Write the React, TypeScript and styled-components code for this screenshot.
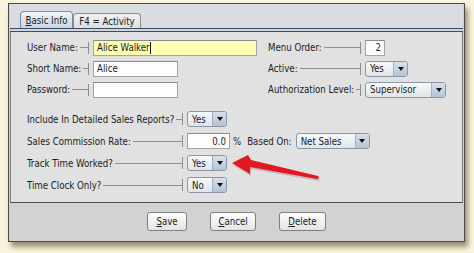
import React from "react";
import styled, { createGlobalStyle } from "styled-components";

const GlobalStyle = createGlobalStyle`
  html, body {
    margin: 0;
    padding: 0;
    background: #fbf4dc;
  }
  body {
    font-family: "DejaVu Sans Condensed", "Liberation Sans", sans-serif;
    font-size: 9.6px;
    color: #1b1b1b;
  }
`;

const Page = styled.div`
  position: relative;
  width: 474px;
  height: 253px;
  padding: 3px 0 0 8px;
  box-sizing: border-box;
`;

const Window = styled.div`
  width: 457px;
  height: 239px;
  box-sizing: border-box;
  border: 1px solid #4b4b4b;
  background: #d2d2d2;
  box-shadow: 3px 5px 5px rgba(75, 65, 40, 0.55);
  display: flex;
  flex-direction: column;
`;

const TabStrip = styled.div`
  height: 24px;
  margin: 0 1px;
  padding-left: 10px;
  display: flex;
  align-items: flex-end;
  background: #d9dce1;
`;

const Tab = styled.div<{ $active?: boolean; $width: number }>`
  width: ${(p) => p.$width}px;
  height: ${(p) => (p.$active ? 17 : 15)}px;
  box-sizing: border-box;
  display: flex;
  align-items: center;
  justify-content: center;
  border: 1px solid ${(p) => (p.$active ? "#7a8aa0" : "#8d8d8d")};
  border-bottom: none;
  border-radius: 4px 4px 0 0;
  background: ${(p) =>
    p.$active
      ? "linear-gradient(#f1f4f8, #c9d4e1)"
      : "linear-gradient(#f2f2f2, #dedfe1)"};
  white-space: nowrap;
`;

const TabRule = styled.div`
  height: 2px;
  margin: 0 1px;
  background: #cdd5e0;
  border-top: 1px solid #3e4c60;
  border-bottom: 1px solid #3e4c60;
`;

const Panel = styled.div`
  margin: 0 1px;
  height: 171px;
  box-sizing: border-box;
  background: #e1e1e1;
  border: 1px solid #7b7b7b;
  border-top: none;
  border-bottom-color: #4d4d4d;
  padding: 5px 0 0 16px;
`;

const TopGrid = styled.div`
  display: grid;
  grid-template-columns: 241px 1fr;
  grid-auto-rows: 21px;
`;

const BottomGrid = styled.div`
  margin-top: 8px;
  display: grid;
  grid-auto-rows: 22px;
`;

const Row = styled.div<{ $labelWidth: number }>`
  display: grid;
  grid-template-columns: ${(p) => p.$labelWidth}px auto;
  column-gap: 4px;
  align-items: center;
  justify-content: start;
`;

const LabelCell = styled.div`
  display: flex;
  align-items: center;
`;

const Label = styled.span`
  white-space: nowrap;
`;

const Leader = styled.span`
  flex: 1;
  height: 1px;
  margin-left: 2px;
  background: #8e8e8e;
`;

const Tick = styled.span`
  width: 1px;
  height: 12px;
  background: #8e8e8e;
`;

const TextBox = styled.div<{ $width: number; $yellow?: boolean; $right?: boolean }>`
  width: ${(p) => p.$width}px;
  height: 16px;
  box-sizing: border-box;
  border: 1px solid #a3a3a3;
  border-top-color: #8a8a8a;
  background: ${(p) => (p.$yellow ? "#ffffb3" : "#fdfdfd")};
  padding: 0 3px;
  display: flex;
  align-items: center;
  justify-content: ${(p) => (p.$right ? "flex-end" : "flex-start")};
  white-space: nowrap;
`;

const Caret = styled.span`
  width: 1px;
  height: 12px;
  background: #111;
`;

const SelectBox = styled.div<{ $width: number }>`
  width: ${(p) => p.$width}px;
  height: 16px;
  box-sizing: border-box;
  border: 1px solid #8b96a6;
  border-radius: 3px;
  background: linear-gradient(#f7f9fb, #dfe5ec);
  display: flex;
  align-items: stretch;
  overflow: hidden;
`;

const SelectValue = styled.span`
  flex: 1;
  padding-left: 4px;
  display: flex;
  align-items: center;
  white-space: nowrap;
`;

const SelectArrow = styled.span`
  width: 13px;
  border-left: 1px solid #a2afc0;
  background: linear-gradient(#d8e1eb, #b4c3d4);
  display: flex;
  align-items: center;
  justify-content: center;

  &::after {
    content: "";
    border-left: 3px solid transparent;
    border-right: 3px solid transparent;
    border-top: 4px solid #111;
  }
`;

const Inline = styled.div`
  display: flex;
  align-items: center;
`;

const Unit = styled.span<{ $gap: number }>`
  margin-left: ${(p) => p.$gap}px;
  white-space: nowrap;
`;

const ButtonBar = styled.div`
  flex: 1;
  display: flex;
  align-items: center;
  justify-content: center;
  gap: 23px;
  padding-bottom: 1px;
`;

const Button = styled.div<{ $width: number }>`
  width: ${(p) => p.$width}px;
  height: 19px;
  box-sizing: border-box;
  border: 1px solid #7f7f7f;
  border-radius: 3px;
  background: linear-gradient(#fdfdfd, #e4e4e4);
  display: flex;
  align-items: center;
  justify-content: center;
`;

const Key = styled.span`
  text-decoration: underline;
`;

const ArrowMark = styled.svg`
  position: absolute;
  left: 228px;
  top: 150px;
`;

function Select({ value, width }: { value: string; width: number }) {
  return (
    <SelectBox $width={width}>
      <SelectValue>{value}</SelectValue>
      <SelectArrow />
    </SelectBox>
  );
}

function Field({ label, width, children }: { label: string; width: number; children: React.ReactNode }) {
  return (
    <Row $labelWidth={width}>
      <LabelCell>
        <Label>{label}</Label>
        <Leader />
        <Tick />
      </LabelCell>
      {children}
    </Row>
  );
}

export default function App() {
  return (
    <Page>
      <GlobalStyle />
      <Window>
        <TabStrip>
          <Tab $active $width={53}>
            <span>
              <Key>B</Key>asic Info
            </span>
          </Tab>
          <Tab $width={68}>F4 = Activity</Tab>
        </TabStrip>
        <TabRule />
        <Panel>
          <TopGrid>
            <Field label="User Name:" width={62}>
              <TextBox $width={164} $yellow>
                Alice Walker
                <Caret />
              </TextBox>
            </Field>
            <Field label="Menu Order:" width={93}>
              <TextBox $width={20} $right>
                2
              </TextBox>
            </Field>
            <Field label="Short Name:" width={62}>
              <TextBox $width={85}>Alice</TextBox>
            </Field>
            <Field label="Active:" width={93}>
              <Select value="Yes" width={43} />
            </Field>
            <Field label="Password:" width={62}>
              <TextBox $width={85} />
            </Field>
            <Field label="Authorization Level:" width={93}>
              <Select value="Supervisor" width={81} />
            </Field>
          </TopGrid>
          <BottomGrid>
            <Field label="Include In Detailed Sales Reports?" width={156}>
              <Select value="Yes" width={40} />
            </Field>
            <Field label="Sales Commission Rate:" width={156}>
              <Inline>
                <TextBox $width={43} $right>
                  0.0
                </TextBox>
                <Unit $gap={3}>%</Unit>
                <Unit $gap={6}>Based On:</Unit>
                <Unit $gap={4}>
                  <Select value="Net Sales" width={74} />
                </Unit>
              </Inline>
            </Field>
            <Field label="Track Time Worked?" width={156}>
              <Select value="Yes" width={40} />
            </Field>
            <Field label="Time Clock Only?" width={156}>
              <Select value="No" width={40} />
            </Field>
          </BottomGrid>
        </Panel>
        <ButtonBar>
          <Button $width={40}>
            <span>
              <Key>S</Key>ave
            </span>
          </Button>
          <Button $width={46}>
            <span>
              <Key>C</Key>ancel
            </span>
          </Button>
          <Button $width={47}>
            <span>
              <Key>D</Key>elete
            </span>
          </Button>
        </ButtonBar>
      </Window>
      <ArrowMark width="96" height="36" viewBox="0 0 96 36">
        <polygon
          points="5,15 21,7 24,12 91,28 92,30 90,31 23,19 23,26"
          fill="rgba(60,0,0,0.18)"
        />
        <polygon points="4,13 20,5 23,10 90,26 91,28 89,29 22,17 22,24" fill="#e3171f" />
      </ArrowMark>
    </Page>
  );
}
